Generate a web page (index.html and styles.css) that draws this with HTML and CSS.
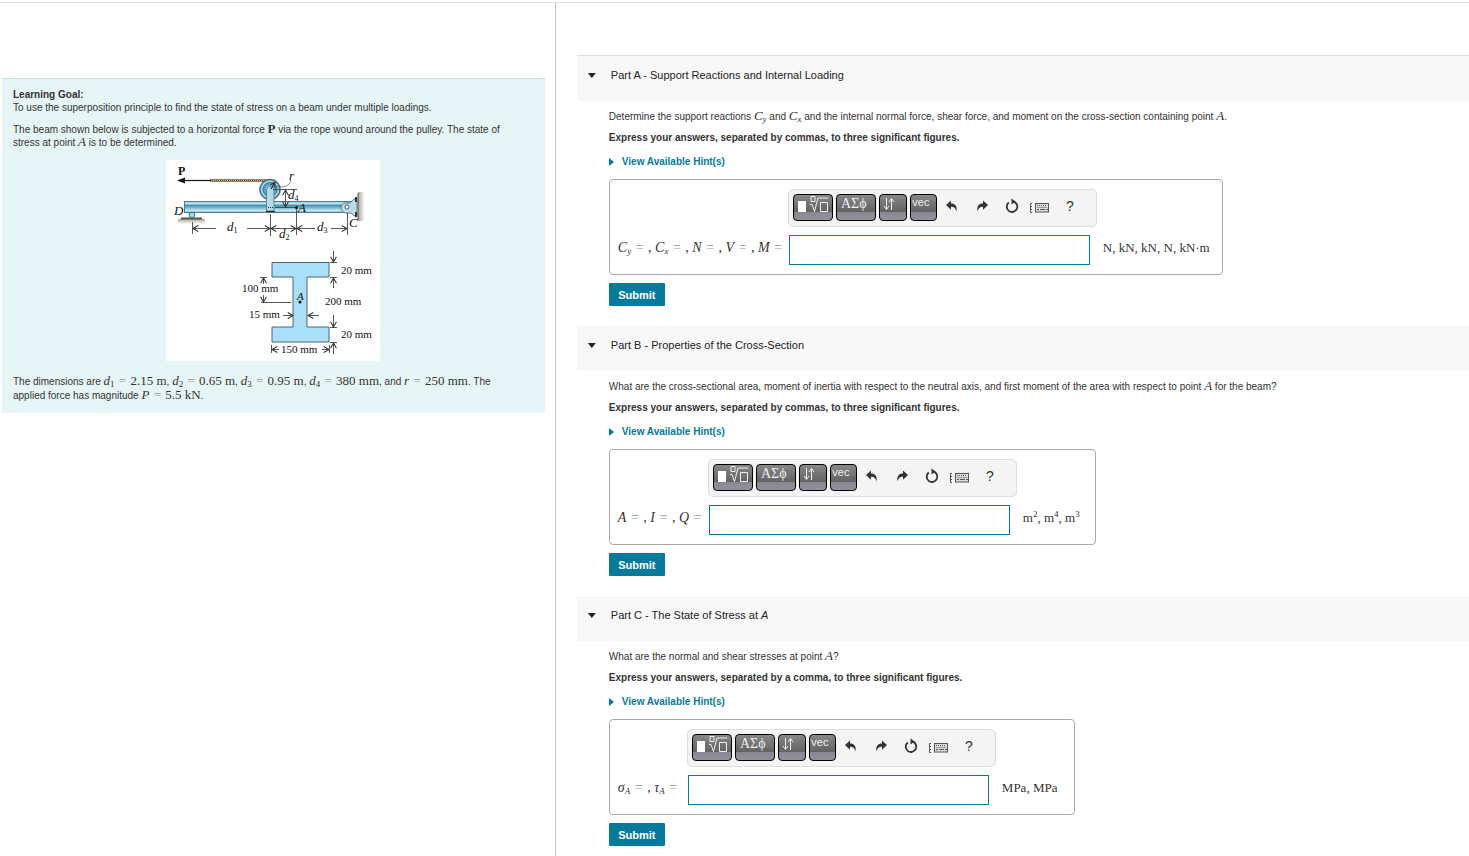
FILE: index.html
```html
<!DOCTYPE html>
<html lang="en">
<head>
  <meta charset="UTF-8">
  <title>Superposition - State of Stress</title>
  <link rel="stylesheet" href="styles.css">
</head>
<body>
  <!-- shared icons -->
  <svg class="sprite" aria-hidden="true">
    <symbol id="i-root" viewBox="0 0 38 25">
      <rect x="4" y="6" width="8" height="11" fill="#fff"/>
      <path d="M17 1.500h4v5h-4zM16 9.500h2l2.500 7 3.500-13.500h10M26.500 7.500h7v9h-7z" fill="none" stroke="#eee"/>
    </symbol>
    <symbol id="i-arrows" viewBox="0 0 26 25">
      <path d="M6.500 3v11M4 11l2.500 3.500L9 11M11.500 15V4M9 7l2.500-3.500L14 7" fill="none" stroke="#eee"/>
    </symbol>
    <symbol id="i-undo" viewBox="0 0 12 12">
      <path d="M0 5l5-4.500v3c4 0 6.500 2.500 5.500 8C9.500 8 8 6.800 5 6.800v3z"/>
    </symbol>
    <symbol id="i-redo" viewBox="0 0 12 12">
      <path d="M12 5L7 .5v3c-4 0-6.500 2.500-5.500 8C2.500 8 4 6.800 7 6.800v3z"/>
    </symbol>
    <symbol id="i-reset" viewBox="0 0 14 16">
      <path d="M8 3.500A5.300 5.300 0 1 1 3.800 4.500" fill="none" stroke="#333" stroke-width="1.800"/>
      <path d="M6.500.5l4 3-4 3z"/>
    </symbol>
    <symbol id="i-keys" viewBox="0 0 20 10">
      <path d="M3 .5H1.500v9H3M1.500 3.500H3M1.500 6.500H3" fill="none" stroke="#555"/>
      <rect x="6.500" y=".5" width="13" height="8.500" fill="#ddd" stroke="#555"/>
      <path d="M8 2.500h10M8.500 4.500h10" stroke="#555" stroke-dasharray="1 1"/>
      <path d="M8 6.500h2M11 6.500h5M17 6.500h2" stroke="#555"/>
    </symbol>
  </svg>

  <main class="page">
    <aside class="intro">
      <div class="goal">
        <p><b>Learning Goal:</b><br>To use the superposition principle to find the state of stress on a beam under multiple loadings.</p>
        <p>The beam shown below is subjected to a horizontal force <span class="math"><b>P</b></span> via the rope wound around the pulley. The state of stress at point <span class="math"><i>A</i></span> is to be determined.</p>

        <svg class="figure" viewBox="0 0 214 201" role="img" aria-label="Beam with pulley and its I-shaped cross-section">
          <defs>
            <linearGradient id="beam" x1="0" y1="0" x2="0" y2="1">
              <stop offset="0" stop-color="#8cc5dc"/>
              <stop offset=".25" stop-color="#d3edf7"/>
              <stop offset=".3" stop-color="#2f87a9"/>
              <stop offset=".7" stop-color="#9fd2e5"/>
              <stop offset=".82" stop-color="#c7e6f2"/>
              <stop offset="1" stop-color="#7fb7cd"/>
            </linearGradient>
            <linearGradient id="ground" x1="0" y1="0" x2="0" y2="1">
              <stop offset="0" stop-color="#a9a594"/>
              <stop offset="1" stop-color="#fff"/>
            </linearGradient>
            <linearGradient id="wall">
              <stop offset="0" stop-color="#aaa79a"/>
              <stop offset="1" stop-color="#f6f5f0"/>
            </linearGradient>
            <marker id="tip" viewBox="0 0 6 6" refX="5.500" refY="3" markerWidth="7" markerHeight="7" markerUnits="userSpaceOnUse" orient="auto-start-reverse">
              <path d="M1 .5L5.500 3 1 5.500" fill="none" stroke="#333" stroke-width=".9"/>
            </marker>
          </defs>
          <rect width="214" height="201" fill="#fff"/>

          <!-- supports -->
          <rect x="12" y="59" width="27" height="5" fill="url(#ground)"/>
          <path d="M15 58.500h21" stroke="#555" stroke-width="2"/>
          <rect x="192" y="32" width="6" height="29" fill="url(#wall)"/>
          <path d="M192 33v27" stroke="#555"/>
          <rect x="18.500" y="41.500" width="170" height="11" fill="url(#beam)" stroke="#527b8b"/>
          <circle cx="26" cy="55" r="2.800" fill="#a9dcf2" stroke="#356c83"/>
          <path d="M191 38v18h-3l-3-3h-5a5 5 0 0 1 0-10h4l4-4z" fill="#b9dbea" stroke="#426b7c" stroke-width=".8"/>
          <path d="M190 37v5M190 52v5" stroke="#333" stroke-width="2"/>
          <circle cx="181" cy="47" r="2" fill="#fff" stroke="#333" stroke-width=".8"/>

          <!-- rope and pulley -->
          <path d="M44 20.500h60" stroke="#6b5a35" stroke-width="2.500"/>
          <path d="M45 20.500h58" stroke="#c7ac75" stroke-dasharray="1 1"/>
          <path d="M17 20.500h28" stroke="#111" stroke-width="1.200"/>
          <path d="M11 20.500l8-3v6z" fill="#111"/>
          <circle cx="104" cy="29.500" r="10" fill="#a7d5e6" stroke="#4e7182" stroke-width="1.500"/>
          <circle cx="104" cy="29.500" r="7" fill="#4ca8ca" stroke="#2f7898"/>
          <circle cx="104" cy="29.500" r="4" fill="#bfe4f1"/>
          <path d="M100.500 51V30a3.500 3.500 0 0 1 7.500 0v21z" fill="#b5d7e6" stroke="#4c7282" stroke-width=".8"/>
          <path d="M100 51.500h9" stroke="#222"/>
          <path d="M102 47.500h5" stroke="#333" stroke-dasharray="1 1"/>
          <path d="M105 29l4-7" stroke="#111" marker-end="url(#tip)"/>
          <path d="M107 25c8 3 16 3 18-5" fill="none" stroke="#555" stroke-width=".7"/>

          <!-- beam dimensions -->
          <g fill="none" stroke="#444" stroke-width=".9">
            <path d="M107 29.500h24M109 47.500h22M26.500 62v12M104.500 54v22M130.500 49v26M181.500 53v22"/>
            <path d="M119.500 30v17" marker-start="url(#tip)" marker-end="url(#tip)"/>
            <path d="M105 68.500h25" marker-start="url(#tip)" marker-end="url(#tip)"/>
            <path d="M50 68.500H27" marker-end="url(#tip)"/>
            <path d="M81 68.500h23" marker-end="url(#tip)"/>
            <path d="M149 68.500h-18" marker-end="url(#tip)"/>
            <path d="M165 68.500h16" marker-end="url(#tip)"/>
          </g>
          <circle cx="130.500" cy="47.500" r="1.500"/>
          <g class="figure-names">
            <text x="12" y="15" class="force">P</text>
            <text x="8" y="55">D</text>
            <text x="123" y="20">r</text>
            <text x="122" y="39">d<tspan class="fig-sub" dy="2">4</tspan></text>
            <text x="132" y="52">A</text>
            <text x="183" y="67">C</text>
            <text x="61" y="71">d<tspan class="fig-sub" dy="2">1</tspan></text>
            <text x="113" y="78">d<tspan class="fig-sub" dy="2">2</tspan></text>
            <text x="151" y="71">d<tspan class="fig-sub" dy="2">3</tspan></text>
          </g>

          <!-- cross-section -->
          <path d="M106 102.500h57v14.500h-22v50h22v15h-57v-15h21v-50h-21z" fill="#a9dff8" stroke="#4d6670"/>
          <g fill="none" stroke="#444" stroke-width=".9">
            <path d="M164 102.500h7M164 117.500h7M164 167.500h7M164 182.500h7M94 117.500h7M95 142.500h30M105.500 185v8M163.500 185v8"/>
            <path d="M167.500 91v11" marker-end="url(#tip)"/>
            <path d="M167.500 128v-10" marker-end="url(#tip)"/>
            <path d="M167.500 155v12" marker-end="url(#tip)"/>
            <path d="M167.500 194v-11" marker-end="url(#tip)"/>
            <path d="M97.500 124v-6" marker-end="url(#tip)"/>
            <path d="M97.500 135v7" marker-end="url(#tip)"/>
            <path d="M117 155.500h10" marker-end="url(#tip)"/>
            <path d="M153 155.500h-11" marker-end="url(#tip)"/>
            <path d="M113 189.500h-7" marker-end="url(#tip)"/>
            <path d="M156 189.500h7" marker-end="url(#tip)"/>
          </g>
          <circle cx="134" cy="142" r="1.500"/>
          <g class="figure-sizes">
            <text x="175" y="114">20 mm</text>
            <text x="159" y="145">200 mm</text>
            <text x="175" y="178">20 mm</text>
            <text x="76" y="132">100 mm</text>
            <text x="83" y="158">15 mm</text>
            <text x="115" y="193">150 mm</text>
            <text x="131" y="140"><tspan font-style="italic">A</tspan></text>
          </g>
        </svg>

        <p class="dimensions">The dimensions are <span class="math"><i>d</i><sub>1</sub> <s>=</s> 2.15 m</span>, <span class="math"><i>d</i><sub>2</sub> <s>=</s> 0.65 m</span>, <span class="math"><i>d</i><sub>3</sub> <s>=</s> 0.95 m</span>, <span class="math"><i>d</i><sub>4</sub> <s>=</s> 380 mm</span>, and <span class="math"><i>r</i> <s>=</s> 250 mm</span>. The applied force has magnitude <span class="math"><i>P</i> <s>=</s> 5.5 kN</span>.</p>
      </div>
    </aside>

    <div class="parts">
      <section class="part">
        <h2><button class="toggle" aria-label="Collapse Part A"></button><span>Part A - Support Reactions and Internal Loading</span></h2>
        <div class="part-body">
          <p>Determine the support reactions <span class="math"><i>C</i><sub><i>y</i></sub></span> and <span class="math"><i>C</i><sub><i>x</i></sub></span> and the internal normal force, shear force, and moment on the cross-section containing point <span class="math"><i>A</i></span>.</p>
          <p class="express">Express your answers, separated by commas, to three significant figures.</p>
          <a class="hints" href="#">View Available Hint(s)</a>
          <div class="answer answer-a">
            <label class="math" for="answer-a"><i>C</i><sub><i>y</i></sub> <s>=</s> , <i>C</i><sub><i>x</i></sub> <s>=</s> , <i>N</i> <s>=</s> , <i>V</i> <s>=</s> , <i>M</i> <s>=</s></label>
            <div class="editor">
              <div class="toolbar">
                <button class="key wide" aria-label="Templates"><svg><use href="#i-root"/></svg></button>
                <button class="key wide greek">ΑΣϕ</button>
                <button class="key" aria-label="Subscripts"><svg><use href="#i-arrows"/></svg></button>
                <button class="key vec">vec</button>
                <button class="tool" aria-label="Undo"><svg class="arrow"><use href="#i-undo"/></svg></button>
                <button class="tool" aria-label="Redo"><svg class="arrow"><use href="#i-redo"/></svg></button>
                <button class="tool" aria-label="Reset"><svg class="reset"><use href="#i-reset"/></svg></button>
                <button class="tool keyboard" aria-label="Keyboard shortcuts"><svg class="keys"><use href="#i-keys"/></svg></button>
                <button class="tool help">?</button>
              </div>
              <input type="text" id="answer-a">
            </div>
            <span class="math units">N, kN, kN, N, kN·m</span>
          </div>
          <button class="submit">Submit</button>
        </div>
      </section>

      <section class="part">
        <h2><button class="toggle" aria-label="Collapse Part B"></button><span>Part B - Properties of the Cross-Section</span></h2>
        <div class="part-body">
          <p>What are the cross-sectional area, moment of inertia with respect to the neutral axis, and first moment of the area with respect to point <span class="math"><i>A</i></span> for the beam?</p>
          <p class="express">Express your answers, separated by commas, to three significant figures.</p>
          <a class="hints" href="#">View Available Hint(s)</a>
          <div class="answer answer-b">
            <label class="math" for="answer-b"><i>A</i> <s>=</s> , <i>I</i> <s>=</s> , <i>Q</i> <s>=</s></label>
            <div class="editor">
              <div class="toolbar">
                <button class="key wide" aria-label="Templates"><svg><use href="#i-root"/></svg></button>
                <button class="key wide greek">ΑΣϕ</button>
                <button class="key" aria-label="Subscripts"><svg><use href="#i-arrows"/></svg></button>
                <button class="key vec">vec</button>
                <button class="tool" aria-label="Undo"><svg class="arrow"><use href="#i-undo"/></svg></button>
                <button class="tool" aria-label="Redo"><svg class="arrow"><use href="#i-redo"/></svg></button>
                <button class="tool" aria-label="Reset"><svg class="reset"><use href="#i-reset"/></svg></button>
                <button class="tool keyboard" aria-label="Keyboard shortcuts"><svg class="keys"><use href="#i-keys"/></svg></button>
                <button class="tool help">?</button>
              </div>
              <input type="text" id="answer-b">
            </div>
            <span class="math units">m<sup>2</sup>, m<sup>4</sup>, m<sup>3</sup></span>
          </div>
          <button class="submit">Submit</button>
        </div>
      </section>

      <section class="part">
        <h2><button class="toggle" aria-label="Collapse Part C"></button><span>Part C - The State of Stress at <i>A</i></span></h2>
        <div class="part-body">
          <p>What are the normal and shear stresses at point <span class="math"><i>A</i></span>?</p>
          <p class="express">Express your answers, separated by a comma, to three significant figures.</p>
          <a class="hints" href="#">View Available Hint(s)</a>
          <div class="answer answer-c">
            <label class="math" for="answer-c"><i>σ</i><sub><i>A</i></sub> <s>=</s> , <i>τ</i><sub><i>A</i></sub> <s>=</s></label>
            <div class="editor">
              <div class="toolbar">
                <button class="key wide" aria-label="Templates"><svg><use href="#i-root"/></svg></button>
                <button class="key wide greek">ΑΣϕ</button>
                <button class="key" aria-label="Subscripts"><svg><use href="#i-arrows"/></svg></button>
                <button class="key vec">vec</button>
                <button class="tool" aria-label="Undo"><svg class="arrow"><use href="#i-undo"/></svg></button>
                <button class="tool" aria-label="Redo"><svg class="arrow"><use href="#i-redo"/></svg></button>
                <button class="tool" aria-label="Reset"><svg class="reset"><use href="#i-reset"/></svg></button>
                <button class="tool keyboard" aria-label="Keyboard shortcuts"><svg class="keys"><use href="#i-keys"/></svg></button>
                <button class="tool help">?</button>
              </div>
              <input type="text" id="answer-c">
            </div>
            <span class="math units">MPa, MPa</span>
          </div>
          <button class="submit">Submit</button>
        </div>
      </section>
    </div>
  </main>
</body>
</html>
```
FILE: styles.css
```css
* {
  box-sizing: border-box;
}

body {
  margin: 0;
  padding-top: 2px;
  font-family: "Liberation Sans", Arial, sans-serif;
  font-size: 10px;
  color: #333;
  background: #fff;
}

p {
  margin: 0;
}

button {
  font-family: inherit;
  padding: 0;
  border: none;
  cursor: pointer;
}

.sprite {
  display: none;
}

.page {
  display: grid;
  grid-template-columns: 28fr 46fr;
  min-height: calc(100vh - 2px);
  border-top: 1px solid #e0e0e0;
}

/* Left column */
.intro {
  padding: 75px 10px 0 2px;
  border-right: 1px solid #b8c4d0;
}

.goal {
  padding: 9px 20px 10px 11px;
  border-top: 1px solid #d6dcdc;
  background: #e6f6f7;
  line-height: 13px;
}

.goal p {
  margin-bottom: 9px;
}

.figure {
  display: block;
  width: 214px;
  height: 201px;
  margin: 11px 0 14px 153px;
}

.goal .dimensions {
  margin: 0;
  line-height: 14px;
}

.figure-names,
.figure-sizes {
  font-family: "Liberation Serif", "Times New Roman", serif;
  fill: #111;
}

.figure-names {
  font-size: 13px;
  font-style: italic;
}

.figure-sizes {
  font-size: 11px;
}

.fig-sub {
  font-size: 8px;
  font-style: normal;
}

.force {
  font-size: 12px;
  font-style: normal;
  font-weight: bold;
}

/* Formulas */
.math {
  font-family: "Liberation Serif", "Times New Roman", serif;
  font-size: 13px;
  line-height: 1;
}

.part-body p .math,
.goal p .math {
  line-height: 0;
}

.math sub,
.math sup {
  font-size: 9px;
  line-height: 0;
}

.math sub {
  vertical-align: -2px;
}

.math s {
  margin: 0 1px;
  color: #999;
  text-decoration: none;
}

/* Right column */
.parts {
  padding: 52px 0 0 21px;
}

.part:first-child {
  border-top: 1px solid #ddd;
}

.part h2 {
  display: flex;
  margin: 0;
  padding: 12px 16px 19px 11px;
  font-size: 11px;
  font-weight: normal;
  line-height: 14px;
  color: #222;
  background: #f8f8f8;
}

.toggle {
  width: 8px;
  height: 14px;
  margin-right: 15px;
  background: #222;
  clip-path: polygon(0 5px, 8px 5px, 4px 10px);
}

.part-body {
  padding: 8px 16px 20px 32px;
  line-height: 15px;
}

.part-body p {
  margin-bottom: 6px;
}

.part-body .express {
  margin-bottom: 9px;
  font-weight: bold;
}

.hints {
  display: flex;
  align-items: center;
  width: max-content;
  margin-bottom: 10px;
  font-weight: bold;
  color: #047b9c;
  text-decoration: none;
}

.hints::before {
  content: "";
  margin-right: 8px;
  border: 4px solid transparent;
  border-left: 5px solid #047b9c;
  border-right: 0;
}

.answer {
  display: flex;
  width: max-content;
  padding: 9px 12px 9px 8px;
  border: 1px solid #aaa;
  border-radius: 4px;
}

.answer label,
.units {
  margin-top: 51px;
  line-height: 15px;
  white-space: nowrap;
}

.answer label {
  font-size: 14px;
}

.answer-a label {
  width: 170px;
}

.answer-b label {
  width: 90px;
}

.answer-c label {
  width: 69px;
}

.units {
  min-width: 60px;
}

.editor {
  display: flex;
  flex-direction: column;
  gap: 8px;
  width: 309px;
  margin-right: 6px;
}

.toolbar {
  display: flex;
  align-items: flex-start;
  height: 38px;
  padding: 4px;
  border: 1px solid #ddd;
  border-radius: 5px;
  background: #f4f4f4;
}

.editor input {
  width: 301px;
  height: 30px;
  margin-left: 1px;
  padding: 0 6px;
  border: 1px solid #047b9c;
  font-size: 13px;
}

.key {
  width: 28px;
  height: 27px;
  margin-right: 3px;
  border: 1px solid #000;
  border-radius: 4px;
  color: #eee;
  background: linear-gradient(#888 0, #636363 66%, #888690 67%, #92909a 100%);
}

.key svg {
  display: block;
  width: 100%;
  height: 25px;
}

.wide {
  width: 40px;
}

.greek {
  padding: 0 4px 8px 0;
  font-family: "Liberation Serif", serif;
  font-size: 14px;
  line-height: 16px;
}

.vec {
  width: 27px;
  margin-right: 0;
  padding: 0 5px 11px 0;
  font-size: 11px;
  line-height: 14px;
}

.tool {
  display: flex;
  align-items: center;
  justify-content: center;
  width: 30px;
  height: 24px;
  color: #333;
  background: none;
}

.tool svg {
  fill: #333;
}

.arrow {
  width: 12px;
  height: 12px;
}

.reset {
  width: 14px;
  height: 16px;
}

.keyboard {
  width: 24px;
  height: 27px;
}

.keys {
  width: 20px;
  height: 10px;
}

.help {
  width: 38px;
  font-size: 14px;
}

.submit {
  display: block;
  width: 56px;
  height: 23px;
  margin-top: 8px;
  border-radius: 1px;
  font-size: 11px;
  font-weight: bold;
  color: #fff;
  background: #047b9c;
}
```
